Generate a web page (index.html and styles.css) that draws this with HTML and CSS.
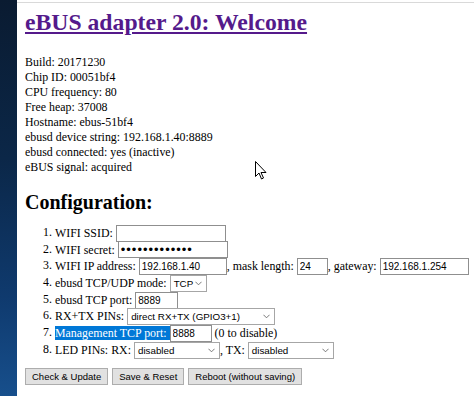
FILE: index.html
```html
<!DOCTYPE html>
<html>
<head>
<meta charset="utf-8">
<title>eBUS adapter 2.0</title>
<link rel="stylesheet" href="styles.css">
</head>
<body>
<div class="desktop"></div>
<div class="window">
  <div class="page">
    <h1><a href="#" class="title">eBUS adapter 2.0: Welcome</a></h1>
    <div class="info">
      <div>Build: 20171230</div>
      <div>Chip ID: 00051bf4</div>
      <div>CPU frequency: 80</div>
      <div>Free heap: 37008</div>
      <div>Hostname: ebus-51bf4</div>
      <div>ebusd device string: 192.168.1.40:8889</div>
      <div>ebusd connected: yes (inactive)</div>
      <div>eBUS signal: acquired</div>
    </div>
    <h2>Configuration:</h2>
    <ol class="config">
      <li><span>WIFI SSID:&nbsp;</span><input class="field w-ssid" type="text" value=""></li>
      <li><span>WIFI secret:&nbsp;</span><input class="field w-secret" type="password" value="xxxxxxxxxxxxx"></li>
      <li><span>WIFI IP address:&nbsp;</span><input class="field w-ip" type="text" value="192.168.1.40"><span>, mask length:&nbsp;</span><input class="field w-mask" type="text" value="24"><span>, gateway:&nbsp;</span><input class="field w-gw" type="text" value="192.168.1.254"></li>
      <li><span>ebusd TCP/UDP mode:&nbsp;</span><span class="select w-mode"><span>TCP</span><svg class="chev" viewBox="0 0 8 5"><path d="M0.5 0.5 L4 4 L7.5 0.5"/></svg></span></li>
      <li><span>ebusd TCP port:&nbsp;</span><input class="field w-port" type="text" value="8889"></li>
      <li><span>RX+TX PINs:&nbsp;</span><span class="select w-pins"><span>direct RX+TX (GPIO3+1)</span><svg class="chev" viewBox="0 0 8 5"><path d="M0.5 0.5 L4 4 L7.5 0.5"/></svg></span></li>
      <li><span class="selected">Management TCP port:&nbsp;</span><input class="field w-mport" type="text" value="8888"><span>&nbsp;(0 to disable)</span></li>
      <li><span>LED PINs: RX:&nbsp;</span><span class="select w-led"><span>disabled</span><svg class="chev" viewBox="0 0 8 5"><path d="M0.5 0.5 L4 4 L7.5 0.5"/></svg></span><span>, TX:&nbsp;</span><span class="select w-led"><span>disabled</span><svg class="chev" viewBox="0 0 8 5"><path d="M0.5 0.5 L4 4 L7.5 0.5"/></svg></span></li>
    </ol>
    <div class="buttons">
      <button class="btn">Check &amp; Update</button>
      <button class="btn">Save &amp; Reset</button>
      <button class="btn">Reboot (without saving)</button>
    </div>
  </div>
  <svg class="cursor" viewBox="0 0 12 19" width="12" height="19"><path d="M0.5 0.5 L0.5 15.5 L4 12 L6.5 18 L8.5 17 L6 11.5 L11 11.5 Z"/></svg>
</div>
</body>
</html>
```
FILE: styles.css
```css
html, body {
  margin: 0;
  padding: 0;
  height: 100%;
}
body {
  display: flex;
  background: #fff;
  font-family: "Liberation Serif", "Times New Roman", serif;
  font-size: 11.9px;
  color: #000;
  overflow: hidden;
}
.desktop {
  width: 17px;
  flex: none;
  background: linear-gradient(180deg, #0a1b31 0%, #0b2748 40%, #0f3a6e 75%, #174f8c 100%);
}
.window {
  flex: 1;
  position: relative;
  border-top: 1px solid #d9d9d9;
  margin-top: 2px;
}
.page {
  padding: 0 8px;
}
h1 {
  margin: 5px 0 0;
  font-size: 23.7px;
  line-height: 28px;
  font-weight: bold;
}
.title {
  color: #551a8b;
  text-decoration: underline;
}
.info {
  margin-top: 19px;
  line-height: 15px;
}
h2 {
  margin: 15px 0 0;
  font-size: 20px;
  line-height: 24px;
  font-weight: bold;
}
.config {
  margin: 10px 0 0;
  padding-left: 30px;
}
.config li {
  height: 16.7px;
  line-height: 16.7px;
  white-space: nowrap;
}
.config li > * {
  vertical-align: middle;
}
.field {
  box-sizing: border-box;
  height: 17px;
  margin: 0;
  padding: 0 2px;
  border: 1px solid #8f8f8f;
  background: #fff;
  font-family: "Liberation Sans", Arial, sans-serif;
  font-size: 10px;
  color: #000;
  outline: none;
}
.w-ssid { width: 110px; }
.w-secret { width: 110px; font-size: 13px; letter-spacing: 1px; }
.w-ip { width: 88px; }
.w-mask { width: 31px; }
.w-gw { width: 89px; }
.w-port { width: 43px; }
.w-mport { width: 42px; }
.select {
  box-sizing: border-box;
  display: inline-flex;
  align-items: center;
  justify-content: space-between;
  height: 17px;
  padding: 0 4px 0 3px;
  border: 1px solid #a6a6a6;
  background: #fff;
  font-family: "Liberation Sans", Arial, sans-serif;
  font-size: 9.8px;
  line-height: 15px;
}
.chev {
  width: 7px;
  height: 5px;
  fill: none;
  stroke: #666;
  stroke-width: 1;
}
.w-mode { width: 37px; }
.w-pins { width: 148px; }
.w-led { width: 86px; }
.selected {
  background: #0078d7;
  color: #fff;
}
.buttons {
  display: flex;
  gap: 4px;
  margin-top: 10px;
}
.btn {
  box-sizing: border-box;
  height: 17px;
  margin: 0;
  padding: 0 6px;
  border: 1px solid #adadad;
  background: #e1e1e1;
  font-family: "Liberation Sans", Arial, sans-serif;
  font-size: 9.5px;
  color: #000;
}
.cursor {
  position: absolute;
  left: 238px;
  top: 158px;
  fill: #fff;
  stroke: #000;
  stroke-width: 1;
  stroke-linejoin: miter;
}
```
